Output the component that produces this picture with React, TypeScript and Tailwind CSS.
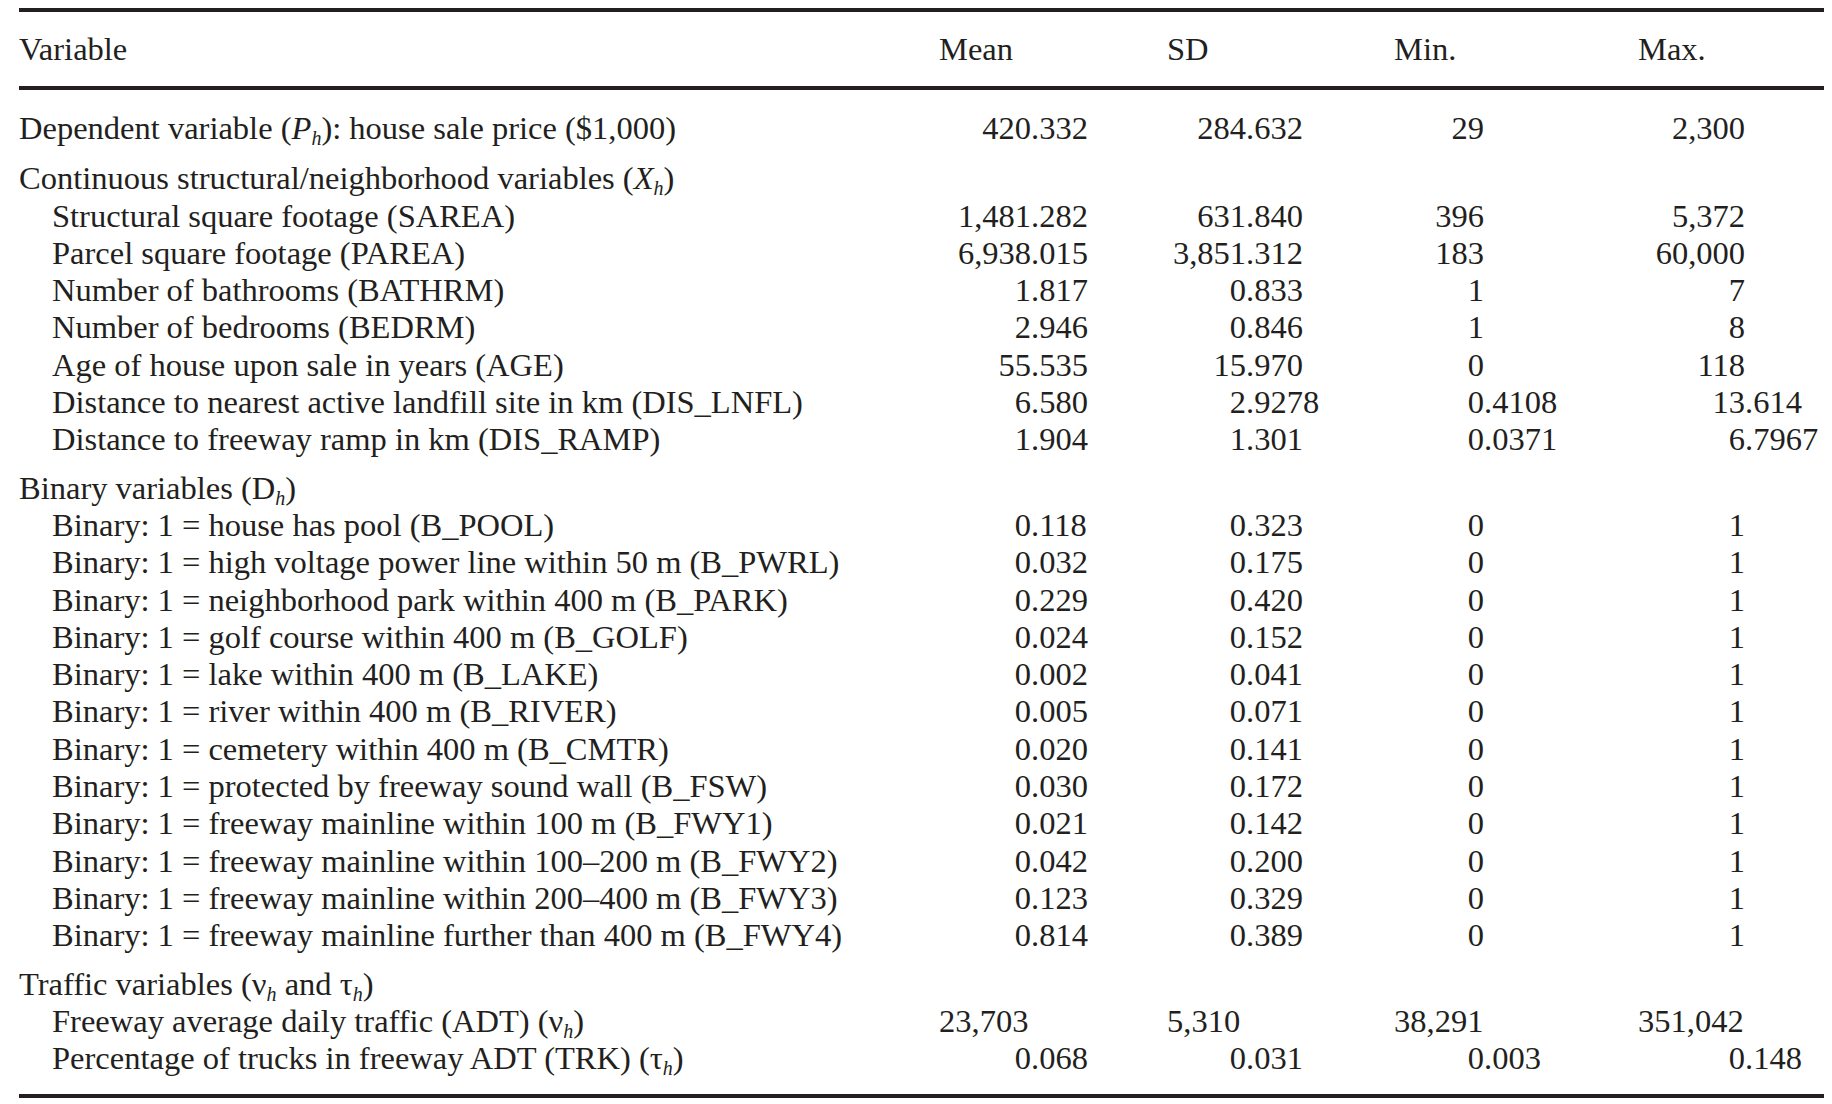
type Cell = string | { left: string };

type Row = {
  label: React.ReactNode;
  indent?: boolean;
  cells?: Cell[];
};

const intWidths = ["w-[92px]", "w-[79px]", "w-[90px]", "w-[107px]"];
const groupGaps = ["", "mt-[13px]", "mt-[11px]", "mt-[11px]"];

function Sub({ children }: { children: React.ReactNode }) {
  return <span className="italic text-[20px] leading-none align-[-6px]">{children}</span>;
}

const groups: Row[][] = [
  [
    {
      label: (
        <>
          Dependent variable (<span className="italic">P</span>
          <Sub>h</Sub>): house sale price ($1,000)
        </>
      ),
      cells: ["420.332", "284.632", "29", "2,300"],
    },
  ],
  [
    {
      label: (
        <>
          Continuous structural/neighborhood variables (<span className="italic">X</span>
          <Sub>h</Sub>)
        </>
      ),
    },
    { label: "Structural square footage (SAREA)", indent: true, cells: ["1,481.282", "631.840", "396", "5,372"] },
    { label: "Parcel square footage (PAREA)", indent: true, cells: ["6,938.015", "3,851.312", "183", "60,000"] },
    { label: "Number of bathrooms (BATHRM)", indent: true, cells: ["1.817", "0.833", "1", "7"] },
    { label: "Number of bedrooms (BEDRM)", indent: true, cells: ["2.946", "0.846", "1", "8"] },
    { label: "Age of house upon sale in years (AGE)", indent: true, cells: ["55.535", "15.970", "0", "118"] },
    { label: "Distance to nearest active landfill site in km (DIS_LNFL)", indent: true, cells: ["6.580", "2.9278", "0.4108", "13.614"] },
    { label: "Distance to freeway ramp in km (DIS_RAMP)", indent: true, cells: ["1.904", "1.301", "0.0371", "6.7967"] },
  ],
  [
    {
      label: (
        <>
          Binary variables (D<Sub>h</Sub>)
        </>
      ),
    },
    { label: "Binary: 1 = house has pool (B_POOL)", indent: true, cells: ["0.118", "0.323", "0", "1"] },
    { label: "Binary: 1 = high voltage power line within 50 m (B_PWRL)", indent: true, cells: ["0.032", "0.175", "0", "1"] },
    { label: "Binary: 1 = neighborhood park within 400 m (B_PARK)", indent: true, cells: ["0.229", "0.420", "0", "1"] },
    { label: "Binary: 1 = golf course within 400 m (B_GOLF)", indent: true, cells: ["0.024", "0.152", "0", "1"] },
    { label: "Binary: 1 = lake within 400 m (B_LAKE)", indent: true, cells: ["0.002", "0.041", "0", "1"] },
    { label: "Binary: 1 = river within 400 m (B_RIVER)", indent: true, cells: ["0.005", "0.071", "0", "1"] },
    { label: "Binary: 1 = cemetery within 400 m (B_CMTR)", indent: true, cells: ["0.020", "0.141", "0", "1"] },
    { label: "Binary: 1 = protected by freeway sound wall (B_FSW)", indent: true, cells: ["0.030", "0.172", "0", "1"] },
    { label: "Binary: 1 = freeway mainline within 100 m (B_FWY1)", indent: true, cells: ["0.021", "0.142", "0", "1"] },
    { label: "Binary: 1 = freeway mainline within 100–200 m (B_FWY2)", indent: true, cells: ["0.042", "0.200", "0", "1"] },
    { label: "Binary: 1 = freeway mainline within 200–400 m (B_FWY3)", indent: true, cells: ["0.123", "0.329", "0", "1"] },
    { label: "Binary: 1 = freeway mainline further than 400 m (B_FWY4)", indent: true, cells: ["0.814", "0.389", "0", "1"] },
  ],
  [
    {
      label: (
        <>
          Traffic variables (ν<Sub>h</Sub> and τ<Sub>h</Sub>)
        </>
      ),
    },
    {
      label: (
        <>
          Freeway average daily traffic (ADT) (ν<Sub>h</Sub>)
        </>
      ),
      indent: true,
      cells: [{ left: "23,703" }, { left: "5,310" }, { left: "38,291" }, { left: "351,042" }],
    },
    {
      label: (
        <>
          Percentage of trucks in freeway ADT (TRK) (τ<Sub>h</Sub>)
        </>
      ),
      indent: true,
      cells: ["0.068", "0.031", "0.003", "0.148"],
    },
  ],
];

function NumCell({ cell, col }: { cell: Cell; col: number }) {
  if (typeof cell !== "string") return <div>{cell.left}</div>;
  const [whole, frac] = cell.split(".");
  return (
    <div className="flex">
      <span className={`${intWidths[col]} text-right`}>{whole}</span>
      {frac && <span>.{frac}</span>}
    </div>
  );
}

function Rule() {
  return <div className="h-[4px] bg-[#231f20]" />;
}

export default function App() {
  return (
    <div className="min-h-[1104px] bg-white pt-[8px] text-[#231f20] font-['Liberation_Serif',serif] text-[32.5px]">
      <div className="ml-[19px] w-[1805px]">
        <Rule />
        <div className="grid h-[74px] grid-cols-[920px_228px_227px_244px_186px] items-center leading-none">
          <div>Variable</div>
          <div>Mean</div>
          <div>SD</div>
          <div>Min.</div>
          <div>Max.</div>
        </div>
        <Rule />
        <div className="flex flex-col pt-[20px] pb-[17px]">
          {groups.map((g, gi) => (
            <div key={gi} className={groupGaps[gi]}>
              {g.map((r, ri) => (
                <div
                  key={ri}
                  className="grid h-[37.3px] grid-cols-[920px_228px_227px_244px_186px] items-center leading-[37.3px] whitespace-nowrap"
                >
                  <div className={r.indent ? "pl-[33px]" : ""}>{r.label}</div>
                  {r.cells?.map((c, ci) => <NumCell key={ci} cell={c} col={ci} />)}
                </div>
              ))}
            </div>
          ))}
        </div>
        <Rule />
      </div>
    </div>
  );
}
